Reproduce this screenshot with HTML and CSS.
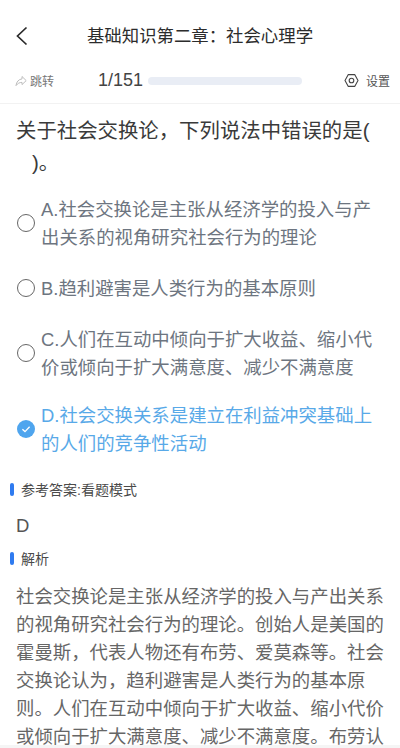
FILE: index.html
```html
<!DOCTYPE html>
<html lang="zh-CN">
<head>
    <meta charset="UTF-8">
    <meta name="viewport" content="width=device-width, initial-scale=1.0">
    <title>基础知识第二章：社会心理学</title>
    <link rel="stylesheet" href="styles.css">
</head>
<body>
    <div class="page">
        <div class="title-bar">
            <svg class="back-icon" width="14" height="20" viewBox="0 0 14 20">
                <path d="M11.5 1.5 L2.5 10 L11.5 18.5" fill="none" stroke="#2a2a2a" stroke-width="1.7"/>
            </svg>
            <h1 class="title">基础知识第二章：社会心理学</h1>
        </div>

        <div class="tool-bar">
            <div class="jump">
                <svg width="12" height="12" viewBox="0 0 12 12">
                    <path d="M7 1.5 L11.2 5.6 L7 9.6 V7.4 C4.6 7.4 2.6 8.4 1 10.6 C1.4 7 3.6 4.2 7 3.9 Z" fill="none" stroke="#bdbdbd" stroke-width="1"/>
                </svg>
                <span>跳转</span>
            </div>
            <div class="progress-num">1/151</div>
            <div class="progress-bar"></div>
            <div class="settings">
                <svg width="15" height="15" viewBox="0 0 15 15">
                    <path d="M4.3 1.6 H10.7 L14 7.5 L10.7 13.4 H4.3 L1 7.5 Z" fill="none" stroke="#444" stroke-width="1.1" stroke-linejoin="round"/>
                    <circle cx="7.5" cy="7.5" r="2.3" fill="none" stroke="#444" stroke-width="1.1"/>
                </svg>
                <span>设置</span>
            </div>
        </div>

        <div class="question">关于社会交换论，下列说法中错误的是(<br><span class="blank">)。</span></div>

        <div class="options">
            <div class="option option-a">
                <span class="radio"></span>
                <div class="option-text">A.社会交换论是主张从经济学的投入与产出关系的视角研究社会行为的理论</div>
            </div>
            <div class="option option-b">
                <span class="radio"></span>
                <div class="option-text">B.趋利避害是人类行为的基本原则</div>
            </div>
            <div class="option option-c">
                <span class="radio"></span>
                <div class="option-text">C.人们在互动中倾向于扩大收益、缩小代价或倾向于扩大满意度、减少不满意度</div>
            </div>
            <div class="option option-d selected">
                <svg class="radio-on" width="18" height="18" viewBox="0 0 18 18">
                    <circle cx="9" cy="9" r="9" fill="#4fa5ee"/>
                    <path d="M5.4 9.2 L8 11.6 L12.6 6.8" fill="none" stroke="#fff" stroke-width="1.3"/>
                </svg>
                <div class="option-text">D.社会交换关系是建立在利益冲突基础上的人们的竞争性活动</div>
            </div>
        </div>

        <div class="section-label"><i></i>参考答案:看题模式</div>
        <div class="answer">D</div>
        <div class="section-label"><i></i>解析</div>
        <div class="analysis">社会交换论是主张从经济学的投入与产出关系的视角研究社会行为的理论。创始人是美国的霍曼斯，代表人物还有布劳、爱莫森等。社会交换论认为，趋利避害是人类行为的基本原<br>则。人们在互动中倾向于扩大收益、缩小代价或倾向于扩大满意度、减少不满意度。布劳认</div>
        <div class="bottom-edge"></div>
    </div>
</body>
</html>
```

FILE: styles.css
```css
* {
    box-sizing: border-box;
    margin: 0;
    padding: 0;
}

html, body {
    height: 100%;
    overflow: hidden;
    background: #fff;
}

body {
    font-family: "Liberation Sans", "Noto Sans CJK SC", sans-serif;
    color: #444;
}

.page {
    position: relative;
    height: 748px;
    overflow: hidden;
}

.title-bar {
    display: flex;
    align-items: center;
    justify-content: center;
    position: relative;
    height: 68px;
}

.back-icon {
    position: absolute;
    left: 15px;
    top: 26px;
}

.title {
    font-size: 17.4px;
    font-weight: 400;
    color: #2c2c2c;
}

.tool-bar {
    display: flex;
    align-items: center;
    height: 25px;
    margin-bottom: 10px;
    padding: 0 10px 0 15px;
    font-size: 12px;
}

.jump {
    display: flex;
    align-items: center;
    gap: 3px;
    width: 83px;
    color: #777;
}

.progress-num {
    width: 50px;
    font-size: 18px;
    color: #444;
}

.progress-bar {
    width: 154px;
    height: 8px;
    border-radius: 4px;
    background: #e9edf5;
}

.settings {
    display: flex;
    align-items: center;
    gap: 7px;
    margin-left: auto;
    color: #555;
}

.question {
    border-top: 1px solid #f2f2f2;
    padding: 11px 16px 0;
    font-size: 20.4px;
    line-height: 32px;
    color: #3a3a3a;
    height: 87px;
}

.blank {
    padding-left: 16px;
}

.options {
    height: 289px;
}

.option {
    display: flex;
    align-items: center;
    gap: 6px;
    padding-left: 17px;
    padding-right: 20px;
    font-size: 18.4px;
    line-height: 28px;
    color: #6d7580;
}

.option-a {
    padding-top: 6px;
}

.option-b {
    padding-top: 23px;
}

.option-c {
    padding-top: 23px;
}

.option-d {
    padding-top: 20px;
}

.radio {
    flex: none;
    width: 18px;
    height: 18px;
    margin-bottom: 3px;
    border: 1.5px solid #666;
    border-radius: 50%;
}

.radio-on {
    flex: none;
    margin-bottom: 2px;
}

.selected {
    color: #58a9e8;
}

.section-label {
    display: flex;
    align-items: center;
    gap: 7px;
    padding-left: 10px;
    height: 20px;
    font-size: 14px;
    color: #4a4a4a;
}

.section-label i {
    width: 4px;
    height: 13px;
    border-radius: 2px;
    background: #2f7bf0;
}

.answer {
    padding: 15px 16px 0;
    height: 49px;
    font-size: 18.5px;
    line-height: 24px;
    color: #555;
}

.analysis {
    padding: 15px 16px 0;
    font-size: 18.4px;
    line-height: 28px;
    color: #666;
}

.bottom-edge {
    position: absolute;
    left: 0;
    right: 0;
    bottom: 0;
    height: 3px;
    background: #f5f5f5;
}
```
